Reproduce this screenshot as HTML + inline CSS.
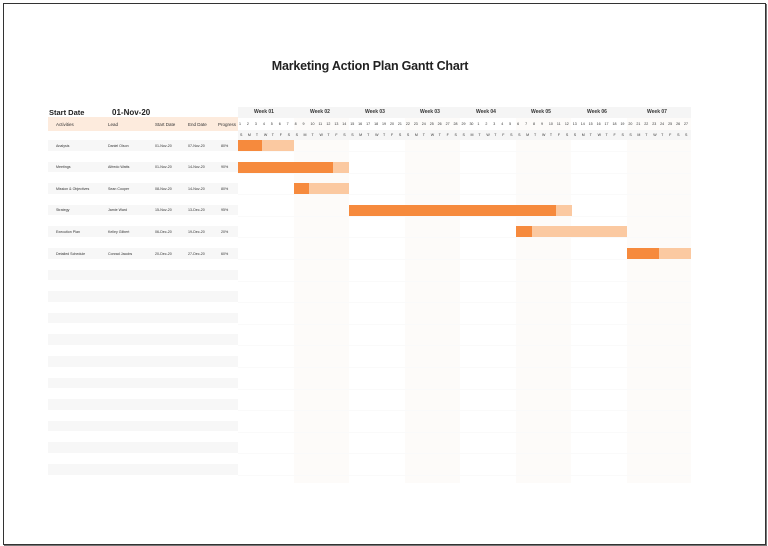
<!DOCTYPE html>
<html><head><meta charset="utf-8"><style>
body{margin:0;width:768px;height:546px;background:#fff;position:relative;overflow:hidden;font-family:"Liberation Sans",sans-serif;}
.a{position:absolute;}
.frame{left:3px;top:3px;width:761px;height:540px;border:1px solid #333;box-shadow:1px 1px 0 #777;}
.t{font-size:3.6px;color:#333;white-space:nowrap;}
</style></head><body>
<div class="a frame"></div>
<div class="a" style="left:0;width:740px;top:59px;text-align:center;font-size:12.5px;font-weight:bold;color:#222;letter-spacing:-0.2px;">Marketing Action Plan Gantt Chart</div>
<div class="a" style="left:49px;top:108px;font-size:7.5px;font-weight:bold;color:#222;">Start Date</div>
<div class="a" style="left:112px;top:108px;font-size:8px;font-weight:bold;color:#222;">01-Nov-20</div>
<div class="a" style="left:48px;top:117px;width:190px;height:14px;background:#fdebdd;"></div>
<div id="g"></div>
<script>
var g=document.getElementById('g'),h='';
function d(x,y,w,hh,c,extra){h+='<div class="a" style="left:'+x+'px;top:'+y+'px;width:'+w+'px;height:'+hh+'px;background:'+c+';'+(extra||'')+'"></div>';}
function t(x,y,s,fs,c,b){h+='<div class="a t" style="left:'+x+'px;top:'+y+'px;font-size:'+fs+'px;color:'+(c||'#333')+';'+(b?'font-weight:bold;':'')+'">'+s+'</div>';}
var x0=238,dw=453/57;
[[294,349],[405,460],[516,571],[627,691]].forEach(function(p){d(p[0],118,p[1]-p[0],365,'#fdfbf9');});
d(238,107,453,11,'#f5f5f5');
d(238,130,453,10,'#f6f6f6');
var wk=['Week 01','Week 02','Week 03','Week 03','Week 04','Week 05','Week 06','Week 07'];
var wc=[266,322,377,432,488,543,599,659];
for(var i=0;i<8;i++)t(wc[i]-12,109,wk[i],5,'#333',1);
var nums=[];for(var i=1;i<=30;i++)nums.push(i);for(var i=1;i<=27;i++)nums.push(i);
var L='SMTWTFS';
for(var i=0;i<57;i++){var cx=x0+i*dw+dw/2;t(cx-3,121.5,nums[i],3.6);t(cx-2,133,L[i%7],3.6);}
var rows=[['Analysis','Daniel Olson','01-Nov-20','07-Nov-20','80%'],['Meetings','Alfredo Watts','01-Nov-20','14-Nov-20','90%'],['Mission &amp; Objectives','Sean Cooper','08-Nov-20','14-Nov-20','80%'],['Strategy','Jamie Ward','15-Nov-20','13-Dec-20','95%'],['Execution Plan','Kelley Gilbert','06-Dec-20','19-Dec-20','20%'],['Detailed Schedule','Conrad Jacobs','20-Dec-20','27-Dec-20','60%']];
for(var i=0;i<16;i++){var y=140+i*21.6;d(48,y,190,10.5,'#f7f7f7');d(238,y+11,453,1,'#fafafa');
if(i<6){var r=rows[i];t(56,y+3.5,r[0],3.6);t(108,y+3.5,r[1],3.6);t(155,y+3.5,r[2],3.6);t(188,y+3.5,r[3],3.6);t(221,y+3.5,r[4],3.6);}}
var bars=[[238,262,294],[238,333,349],[294,309,349],[349,556,572],[516,532,627],[627,659,691]];
bars.forEach(function(b,i){var y=140+i*21.6;d(b[0],y,b[2]-b[0],11,'#fbc9a1');d(b[0],y,b[1]-b[0],11,'#f68a3d');});
g.innerHTML=h;
</script>
<div class="a" style="left:56px;top:122px;font-size:4.5px;color:#333;">Activities</div>
<div class="a" style="left:108px;top:122px;font-size:4.5px;color:#333;">Lead</div>
<div class="a" style="left:155px;top:122px;font-size:4.5px;color:#333;">Start Date</div>
<div class="a" style="left:188px;top:122px;font-size:4.5px;color:#333;">End Date</div>
<div class="a" style="left:218px;top:122px;font-size:4.5px;color:#333;">Progress</div>
</body></html>
